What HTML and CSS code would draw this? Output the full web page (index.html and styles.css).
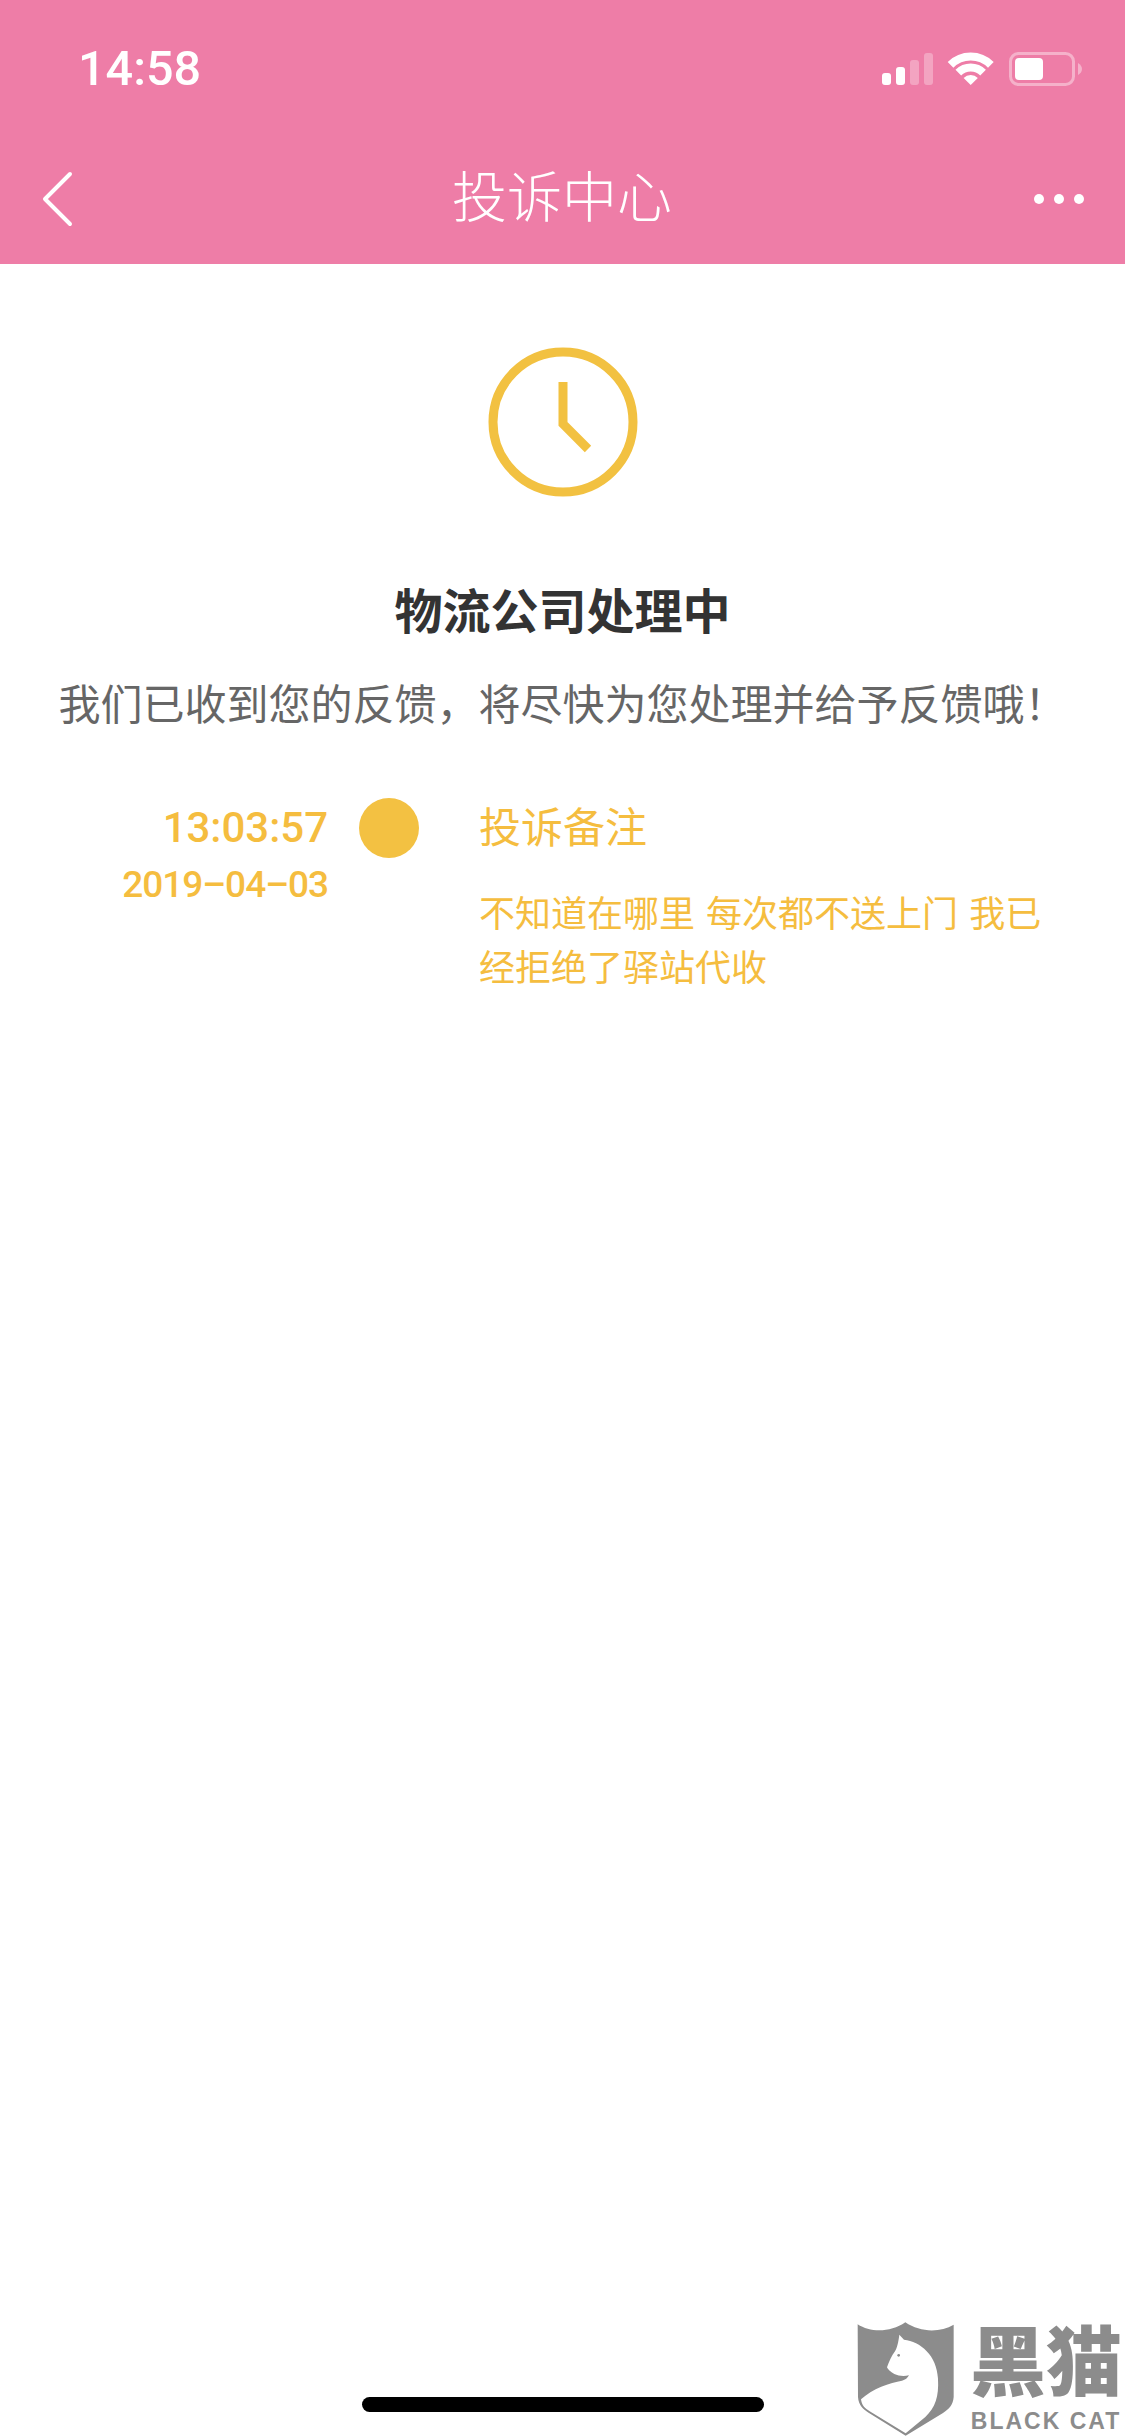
FILE: index.html
```html
<!DOCTYPE html>
<html lang="zh-CN">
<head>
  <meta charset="UTF-8">
  <meta name="viewport" content="width=device-width, initial-scale=1.0">
  <title>投诉中心</title>
  <link rel="stylesheet" href="styles.css">
</head>
<body>
  <div class="page">
    <header class="header">
      <div class="status-bar">
        <span class="status-time">14:58</span>
        <svg class="status-icons" width="202" height="34" viewBox="0 0 202 34">
          <g fill="#fff">
            <rect x="2" y="21" width="9" height="12" rx="3"/>
            <rect x="16" y="15" width="9" height="18" rx="3"/>
            <rect x="30" y="8" width="9" height="25" rx="3" opacity=".3"/>
            <rect x="44" y="1" width="9" height="32" rx="3" opacity=".3"/>
            <path d="M90.7 33L83.6 25.9A10 10 0 0 1 97.8 25.9Z"/>
          </g>
          <g fill="none" stroke="#fff" stroke-width="8">
            <path d="M70.55 12.85A28.5 28.5 0 0 1 110.85 12.85"/>
            <path d="M78.33 20.63A17.5 17.5 0 0 1 103.07 20.63"/>
          </g>
          <rect x="130.5" y="1.5" width="63" height="31" rx="8" fill="none" stroke="#fff" stroke-width="3" opacity=".4"/>
          <rect x="135" y="6" width="28" height="22" rx="4" fill="#fff"/>
          <path d="M198 11C200.5 12.5 202 14.5 202 17C202 19.5 200.5 21.5 198 23Z" fill="#fff" opacity=".4"/>
        </svg>
      </div>
      <nav class="nav">
        <svg class="nav-back" width="34" height="56" viewBox="0 0 34 56">
          <path d="M30 3L5 28L30 53" fill="none" stroke="#fff" stroke-width="4" stroke-linecap="round" stroke-linejoin="round"/>
        </svg>
        <h1 class="nav-title">投诉中心</h1>
        <div class="nav-more"><span></span><span></span><span></span></div>
      </nav>
    </header>

    <main class="content">
      <svg class="clock" width="150" height="150" viewBox="0 0 150 150">
        <circle cx="75" cy="75" r="70" fill="none" stroke="#f2c141" stroke-width="9"/>
        <path d="M75 35V77L100 102" fill="none" stroke="#f2c141" stroke-width="9"/>
      </svg>
      <h2 class="status-title">物流公司处理中</h2>
      <p class="status-desc">我们已收到您的反馈，将尽快为您处理并给予反馈哦！</p>

      <div class="timeline-item">
        <div class="timeline-when">
          <div class="timeline-time">13:03:57</div>
          <div class="timeline-date">2019–04–03</div>
        </div>
        <span class="timeline-dot"></span>
        <div class="timeline-note">
          <div class="note-title">投诉备注</div>
          <p class="note-text">不知道在哪里 每次都不送上门 我已经拒绝了驿站代收</p>
        </div>
      </div>
    </main>

    <div class="home-bar"></div>

    <div class="watermark">
      <svg class="watermark-shield" width="98" height="114" viewBox="0 0 294 342">
        <path d="M2 7C40 32 100 32 145 1C190 32 250 32 290 8V225C288 250 275 262 258 273L146 341L36 273C18 262 5 250 3 225Z" fill="#8c8c8c"/>
        <path d="M127 38L141 53C190 58 240 100 243 170C246 225 235 255 205 285L146 334L38 268C24 259 14 250 12 232C45 200 100 182 135 176C145 174 152 168 156 160C140 163 125 162 112 156C100 150 92 142 90 136C96 120 104 100 114 88C120 78 124 62 127 38Z" fill="#fff"/>
        <circle cx="125" cy="100" r="4" fill="#8c8c8c"/>
      </svg>
      <div class="watermark-text">
        <div class="watermark-cn">黑猫</div>
        <div class="watermark-en">BLACK CAT</div>
      </div>
    </div>
  </div>
</body>
</html>
```

FILE: styles.css
```css
html, body { margin: 0; padding: 0; background: #fff; }
body { font-family: "Liberation Sans", "Noto Sans CJK SC", sans-serif; }
h1, h2, p { margin: 0; font-weight: normal; }
.page { position: relative; width: 1125px; height: 2436px; overflow: hidden; background: #fff; }

.header { height: 264px; background-color: #ee7da7; color: #fff; }
.status-bar { display: flex; justify-content: space-between; height: 134px; padding: 52px 43px 0 78px; box-sizing: border-box; }
.status-time { font-family: "Roboto", sans-serif; font-size: 48.5px; font-weight: 500; line-height: 34px; }
.nav { display: grid; grid-template-columns: 1fr auto 1fr; align-items: center; height: 130px; padding: 0 41px 0 40px; }
.nav-title { padding-bottom: 12px; font-family: "Noto Sans CJK SC", sans-serif; font-size: 55px; font-weight: 300; line-height: 100px; }
.nav-more { display: flex; justify-content: flex-end; gap: 10px; }
.nav-more span { width: 10px; height: 10px; border-radius: 50%; background: #fff; }

.content { display: flex; flex-direction: column; align-items: center; font-family: "Noto Sans CJK SC", sans-serif; }
.clock { display: block; margin-top: 83px; }
.status-title { margin-top: 81px; font-size: 48px; font-weight: 700; line-height: 60px; color: #333; }
.status-desc { margin-top: 34px; font-size: 42px; font-weight: 400; line-height: 60px; color: #666; white-space: nowrap; }

.timeline-item { display: flex; align-self: flex-start; margin-top: 66px; color: #f5bd3f; }
.timeline-when { width: 328px; text-align: right; font-family: "Roboto", sans-serif; }
.timeline-time { font-size: 42px; font-weight: 500; line-height: 60px; }
.timeline-date { font-size: 37px; font-weight: 500; letter-spacing: -1px; line-height: 54px; }
.timeline-dot { flex: none; width: 60px; height: 60px; margin: 0 60px 0 31px; border-radius: 50%; background: #f3c142; }
.timeline-note { width: 590px; }
.note-title { margin-top: -2px; font-size: 42px; font-weight: 400; line-height: 58px; }
.note-text { margin-top: 30px; font-size: 36px; font-weight: 400; line-height: 54px; word-spacing: 3px; }

.home-bar { position: absolute; left: 362px; top: 2397px; width: 402px; height: 15px; border-radius: 8px; background: #000; }

.watermark { position: absolute; right: 3px; top: 2322px; display: flex; gap: 15px; color: #8c8c8c; }
.watermark-text { display: flex; flex-direction: column; align-items: center; padding-top: 7px; font-family: "Liberation Sans", "Noto Sans CJK SC", sans-serif; font-weight: 700; }
.watermark-cn { font-size: 76px; font-weight: 900; line-height: 70px; }
.watermark-en { margin-top: 10px; font-size: 23px; letter-spacing: 2px; line-height: 24px; white-space: nowrap; }
```
